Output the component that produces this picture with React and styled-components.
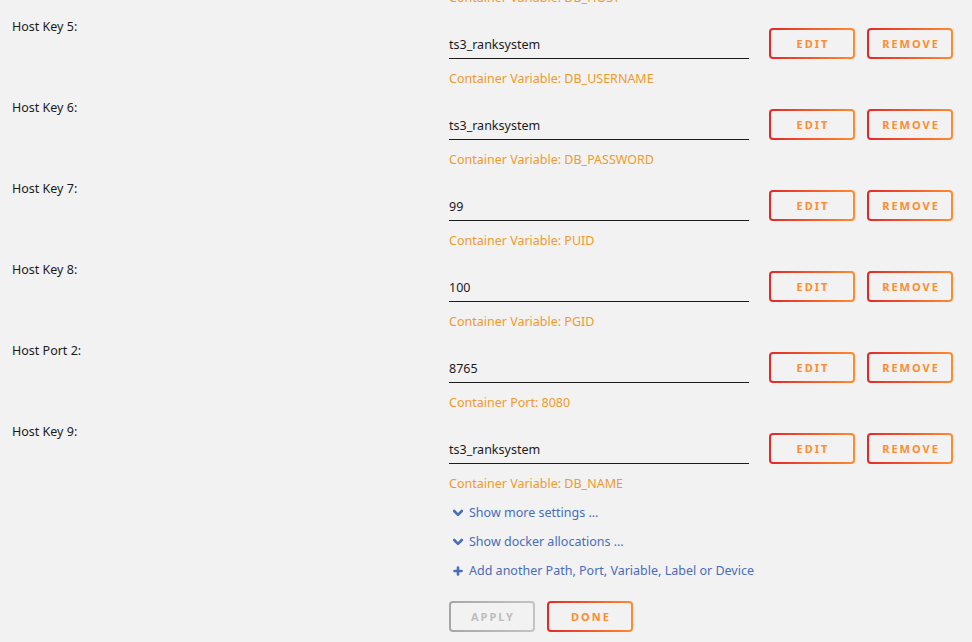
import React from "react";
import styled, { createGlobalStyle } from "styled-components";

const GlobalStyle = createGlobalStyle`
    html, body {
        margin: 0;
        background: #f2f2f2;
        overflow: hidden;
    }
    body {
        font-family: "Noto Sans", "Open Sans", sans-serif;
        font-size: 12.5px;
        color: #1c1b1b;
    }
`;

const Page = styled.div`
    margin-top: -64px;
    padding: 0 19px 0 12px;
`;

const Row = styled.div`
    display: flex;
    height: 81px;
`;

const Label = styled.div`
    width: 437px;
    flex-shrink: 0;
    padding-top: 1px;
    line-height: 18px;
`;

const Content = styled.div`
    display: flex;
    flex-direction: column;
    padding-top: 11px;
`;

const InputLine = styled.div`
    display: flex;
    align-items: center;
`;

const Field = styled.div`
    width: 300px;
    height: 31px;
    box-sizing: border-box;
    border-bottom: 1px solid #1c1b1b;
    display: flex;
    align-items: center;
    padding-top: 3px;
    margin-right: 20px;
`;

const Button = styled.button`
    width: 86px;
    height: 31px;
    box-sizing: border-box;
    border: 2px solid transparent;
    border-radius: 4px;
    background: linear-gradient(#f2f2f2, #f2f2f2) padding-box,
        ${p => p.disabled
            ? "linear-gradient(90deg, #a6a6a6, #c4c4c4)"
            : "linear-gradient(90deg, #e22828, #ff8c2f)"} border-box;
    color: ${p => (p.disabled ? "#bdbdbd" : "#ff8c2f")};
    font-family: "Noto Sans", "Open Sans", sans-serif;
    font-size: 11px;
    font-weight: bold;
    letter-spacing: 2px;
    text-transform: uppercase;
    padding: 0 0 0 2px;
    margin-right: 12px;
    cursor: pointer;
`;

const Hint = styled.div`
    margin-top: 11px;
    line-height: 18px;
    color: #f09a2c;
`;

const Links = styled.div`
    margin-left: 437px;
    padding-top: 1px;
    display: flex;
    flex-direction: column;
    gap: 11px;
`;

const Link = styled.a`
    display: flex;
    align-items: center;
    gap: 6px;
    line-height: 18px;
    color: #486dba;
    text-decoration: none;
    cursor: pointer;
`;

const Icon = styled.svg`
    width: 10px;
    height: 10px;
    margin-left: 4px;
    flex-shrink: 0;
`;

const Actions = styled.div`
    margin: 21px 0 0 437px;
    display: flex;
`;

const Chevron = () => (
    <Icon viewBox="0 0 10 10">
        <polyline points="1.2,3 5,6.8 8.8,3" fill="none" stroke="#486dba" strokeWidth="2.6" strokeLinecap="round" strokeLinejoin="round" />
    </Icon>
);

const Plus = () => (
    <Icon viewBox="0 0 10 10">
        <path d="M5 1.5v7M1.5 5h7" stroke="#486dba" strokeWidth="2.6" strokeLinecap="round" />
    </Icon>
);

const rows = [
    { label: "Host Key 4:", value: "db", hint: "Container Variable: DB_HOST" },
    { label: "Host Key 5:", value: "ts3_ranksystem", hint: "Container Variable: DB_USERNAME" },
    { label: "Host Key 6:", value: "ts3_ranksystem", hint: "Container Variable: DB_PASSWORD" },
    { label: "Host Key 7:", value: "99", hint: "Container Variable: PUID" },
    { label: "Host Key 8:", value: "100", hint: "Container Variable: PGID" },
    { label: "Host Port 2:", value: "8765", hint: "Container Port: 8080" },
    { label: "Host Key 9:", value: "ts3_ranksystem", hint: "Container Variable: DB_NAME" },
];

const App = () => {
    return (
        <>
            <GlobalStyle />
            <Page>
                {rows.map((r, i) => (
                    <Row key={i}>
                        <Label>{r.label}</Label>
                        <Content>
                            <InputLine>
                                <Field>{r.value}</Field>
                                <Button>Edit</Button>
                                <Button>Remove</Button>
                            </InputLine>
                            <Hint>{r.hint}</Hint>
                        </Content>
                    </Row>
                ))}
                <Links>
                    <Link><Chevron />Show more settings ...</Link>
                    <Link><Chevron />Show docker allocations ...</Link>
                    <Link><Plus />Add another Path, Port, Variable, Label or Device</Link>
                </Links>
                <Actions>
                    <Button disabled>Apply</Button>
                    <Button>Done</Button>
                </Actions>
            </Page>
        </>
    );
};

export default App;
